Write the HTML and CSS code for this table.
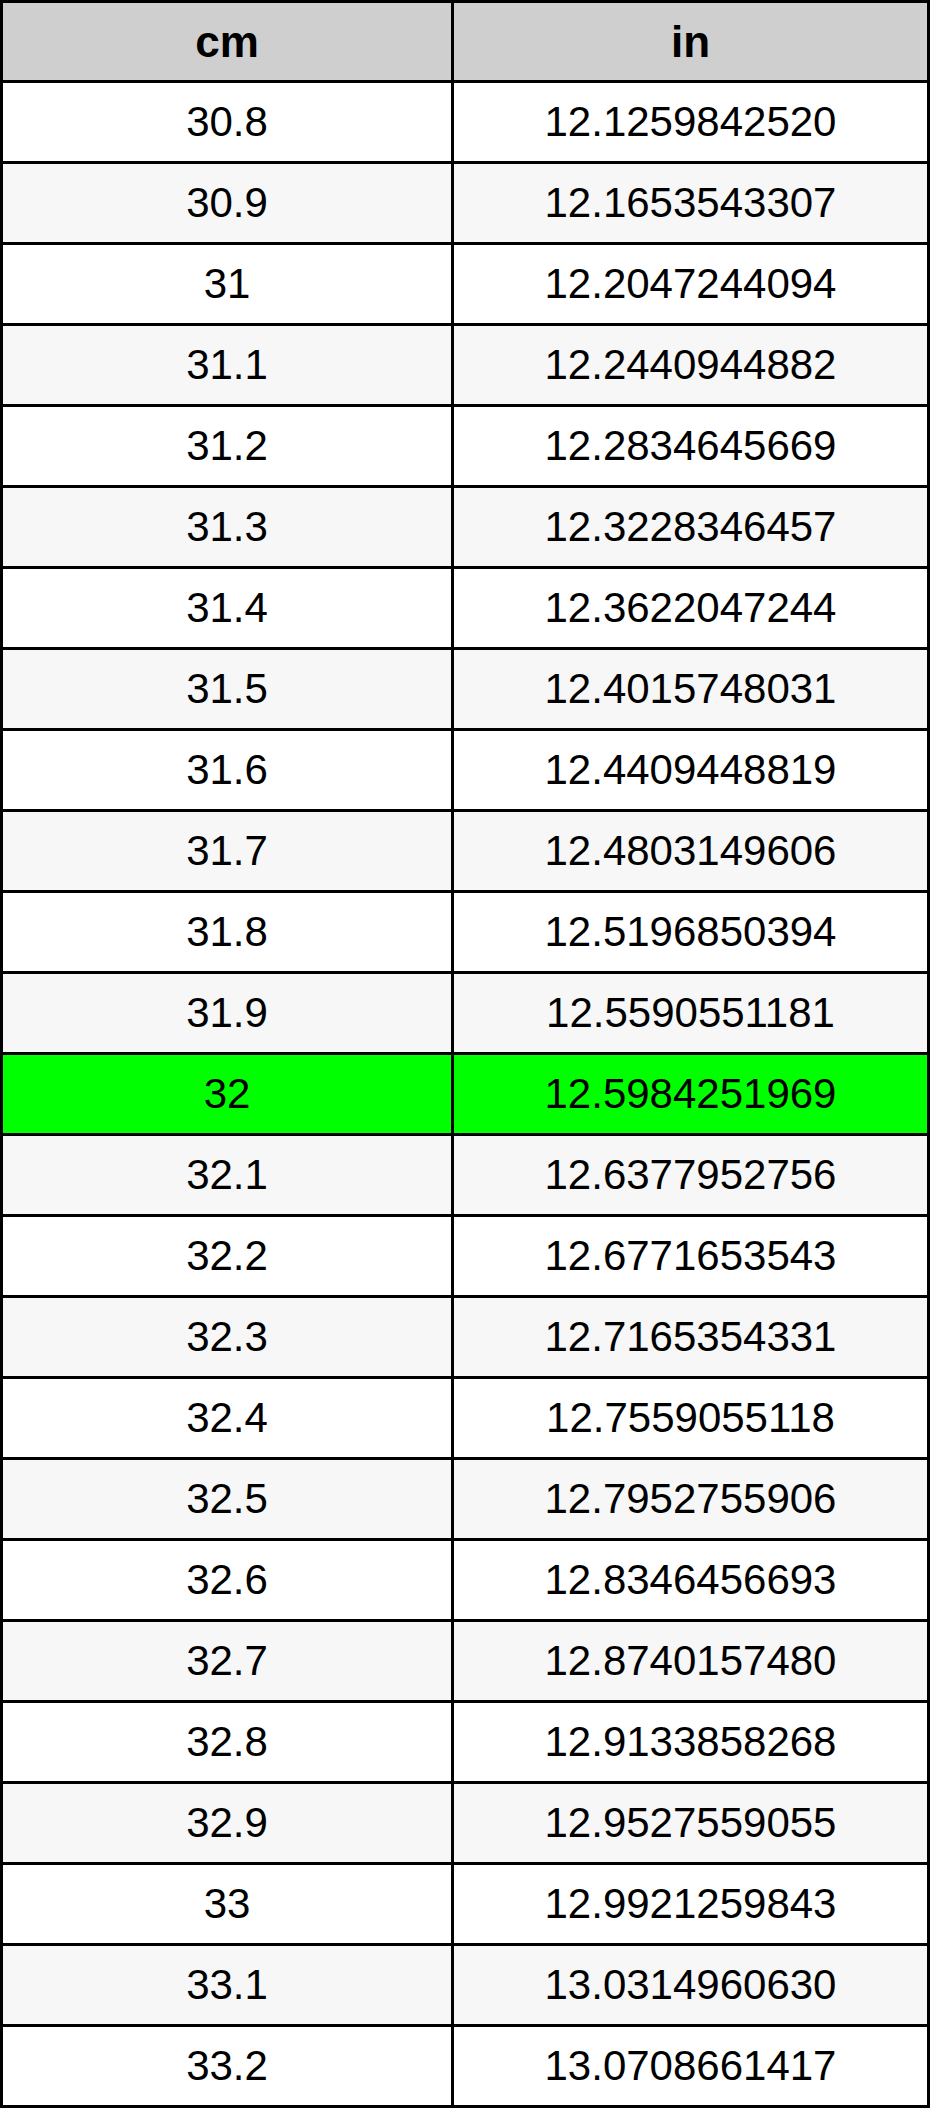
FILE: index.html
```html
<!DOCTYPE html>
<html lang="en">
<head>
<meta charset="utf-8">
<title>cm to in</title>
<link rel="stylesheet" href="styles.css">
</head>
<body>
<table class="conv">
  <thead>
    <tr><th class="c1">cm</th><th class="c2">in</th></tr>
  </thead>
  <tbody>
    <tr><td class="c1">30.8</td><td class="c2">12.1259842520</td></tr>
    <tr class="alt"><td class="c1">30.9</td><td class="c2">12.1653543307</td></tr>
    <tr><td class="c1">31</td><td class="c2">12.2047244094</td></tr>
    <tr class="alt"><td class="c1">31.1</td><td class="c2">12.2440944882</td></tr>
    <tr><td class="c1">31.2</td><td class="c2">12.2834645669</td></tr>
    <tr class="alt"><td class="c1">31.3</td><td class="c2">12.3228346457</td></tr>
    <tr><td class="c1">31.4</td><td class="c2">12.3622047244</td></tr>
    <tr class="alt"><td class="c1">31.5</td><td class="c2">12.4015748031</td></tr>
    <tr><td class="c1">31.6</td><td class="c2">12.4409448819</td></tr>
    <tr class="alt"><td class="c1">31.7</td><td class="c2">12.4803149606</td></tr>
    <tr><td class="c1">31.8</td><td class="c2">12.5196850394</td></tr>
    <tr class="alt"><td class="c1">31.9</td><td class="c2">12.5590551181</td></tr>
    <tr class="hl"><td class="c1">32</td><td class="c2">12.5984251969</td></tr>
    <tr class="alt"><td class="c1">32.1</td><td class="c2">12.6377952756</td></tr>
    <tr><td class="c1">32.2</td><td class="c2">12.6771653543</td></tr>
    <tr class="alt"><td class="c1">32.3</td><td class="c2">12.7165354331</td></tr>
    <tr><td class="c1">32.4</td><td class="c2">12.7559055118</td></tr>
    <tr class="alt"><td class="c1">32.5</td><td class="c2">12.7952755906</td></tr>
    <tr><td class="c1">32.6</td><td class="c2">12.8346456693</td></tr>
    <tr class="alt"><td class="c1">32.7</td><td class="c2">12.8740157480</td></tr>
    <tr><td class="c1">32.8</td><td class="c2">12.9133858268</td></tr>
    <tr class="alt"><td class="c1">32.9</td><td class="c2">12.9527559055</td></tr>
    <tr><td class="c1">33</td><td class="c2">12.9921259843</td></tr>
    <tr class="alt"><td class="c1">33.1</td><td class="c2">13.0314960630</td></tr>
    <tr class="last"><td class="c1">33.2</td><td class="c2">13.0708661417</td></tr>
  </tbody>
</table>
</body>
</html>
```

FILE: styles.css
```css
html, body {
  margin: 0;
  padding: 0;
  background: #ffffff;
}

.conv {
  width: 930px;
  table-layout: fixed;
  border-collapse: separate;
  border-spacing: 0;
  border: 3px solid #000000;
  font-family: "Liberation Sans", Arial, sans-serif;
  color: #000000;
}

.conv th,
.conv td {
  box-sizing: border-box;
  padding: 0;
  text-align: center;
  vertical-align: middle;
  border-bottom: 3px solid #000000;
  line-height: 1;
}

.conv th {
  height: 80px;
  background: #cfcfcf;
  font-weight: bold;
  font-size: 44px;
}

.conv td {
  height: 81px;
  font-size: 42px;
  background: #ffffff;
}

.conv .c1 {
  width: 451px;
  border-right: 3px solid #000000;
}

.conv tr.alt td {
  background: #f7f7f7;
}

.conv tr.hl td {
  background: #00ff00;
}

.conv tr.last td {
  height: 78px;
  border-bottom: none;
}
```
